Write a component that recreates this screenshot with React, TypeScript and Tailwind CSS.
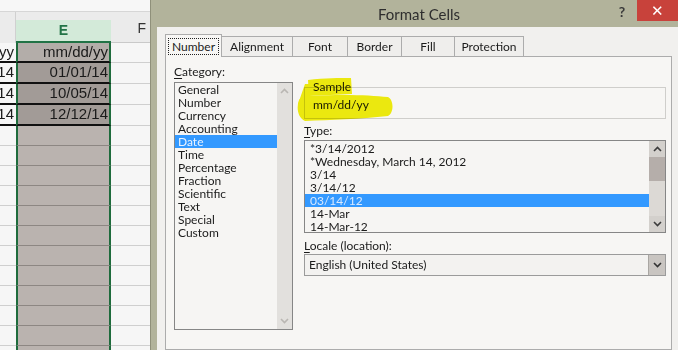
import type { ReactNode } from "react";

const categories = [
  "General",
  "Number",
  "Currency",
  "Accounting",
  "Date",
  "Time",
  "Percentage",
  "Fraction",
  "Scientific",
  "Text",
  "Special",
  "Custom",
];

const types = [
  "*3/14/2012",
  "*Wednesday, March 14, 2012",
  "3/14",
  "3/14/12",
  "03/14/12",
  "14-Mar",
  "14-Mar-12",
];

const tabs = ["Number", "Alignment", "Font", "Border", "Fill", "Protection"];
const tabWidths = ["w-[57px]", "w-[71px]", "w-[55px]", "w-[54px]", "w-[53px]", "w-[69px]"];

const dataRows = [
  { v: "mm/dd/yy", h: "h-[20px]", bg: "bg-[#b3ada9]" },
  { v: "01/01/14", h: "h-[21px]", bg: "bg-[#a29b97]" },
  { v: "10/05/14", h: "h-[21px]", bg: "bg-[#a29b97]" },
  { v: "12/12/14", h: "h-[21px]", bg: "bg-[#a29b97]" },
];

function Chevron({ up, color = "#555" }: { up?: boolean; color?: string }) {
  return (
    <svg width="9" height="6" viewBox="0 0 9 6">
      <path
        d={up ? "M1 5 L4.5 1.5 L8 5" : "M1 1 L4.5 4.5 L8 1"}
        fill="none"
        stroke={color}
        strokeWidth="1.6"
      />
    </svg>
  );
}

function Cell({ children, className }: { children?: ReactNode; className: string }) {
  return (
    <div className={`flex items-center justify-end overflow-hidden whitespace-nowrap ${className}`}>
      {children}
    </div>
  );
}

function Sheet() {
  const empty = Array.from({ length: 12 });
  return (
    <div className="w-[150px] h-full flex flex-col bg-[#f5f5f5] font-['Liberation_Sans',Arial,sans-serif] text-[15px] text-[#1a1a1a]">
      <div className="h-[12px] shrink-0 border-b border-[#d6d6d6] bg-[#f7f7f7]" />
      {/* column headers */}
      <div className="h-[31px] shrink-0 flex">
        <div className="w-[16px] bg-[#ebebeb] border-r border-[#d0d0d0]" />
        <div className="w-[95px] flex flex-col bg-[#ebebeb]">
          <div className="h-[10px]" />
          <div className="flex-1 bg-[#d3ead9] border-b-2 border-[#217346] flex items-center justify-center font-bold text-[#217346] text-[14px]">
            E
          </div>
        </div>
        <div className="flex-1 bg-[#ebebeb] border-b border-[#c9c9c9] flex items-end justify-end pr-[4px] pb-[3px] text-[#333] text-[14px]">
          F
        </div>
      </div>
      {dataRows.map((r) => (
        <div key={r.v} className={`${r.h} shrink-0 flex`}>
          <Cell className="w-[16px] border-b-2 border-[#111] bg-[#f6f6f6] pr-[2px]">{r.v}</Cell>
          <Cell className={`w-[95px] border-x-2 border-x-[#1e6b3c] border-b-2 border-b-[#111] ${r.bg} pr-[1px]`}>
            {r.v}
          </Cell>
          <div className="flex-1 border-b border-[#cfcfcf] bg-[#f6f6f6]" />
        </div>
      ))}
      {empty.map((_, i) => (
        <div key={i} className="h-[20px] flex shrink-0">
          <div className="w-[16px] border-b border-[#cfcfcf] bg-[#f6f6f6]" />
          <div className="w-[95px] border-x-2 border-x-[#1e6b3c] border-b border-b-[#8d8783] bg-[#bab3af]" />
          <div className="flex-1 border-b border-[#cfcfcf] bg-[#f6f6f6]" />
        </div>
      ))}
    </div>
  );
}

function Dialog() {
  return (
    <div className="flex-1 h-full flex flex-col bg-[#b2b39b] border-l border-[#8f907a] font-['Lato','Noto_Sans',sans-serif] text-[12px] text-[#1b1b1b]">
      {/* title bar */}
      <div className="h-[27px] flex shrink-0">
        <div className="flex-1 pl-[80px] pt-[3px] text-center text-[15px] text-[#2e2e2e]">Format Cells</div>
        <div className="w-[30px] text-center pt-[1px] text-[14px] font-bold text-[#3a3a3a]">?</div>
        <div className="w-[41px] h-[21px] bg-[#c8423b] flex items-center justify-center text-white text-[15px]">
          ✕
        </div>
      </div>
      {/* client */}
      <div className="flex-1 flex pl-[6px]">
        <div className="flex-1 bg-[#f1f0ee] pt-[6px] pl-[8px] flex flex-col">
          {/* tabs */}
          <div className="h-[23px] flex items-end shrink-0">
            {tabs.map((t, i) =>
              i === 0 ? (
                <div
                  key={t}
                  className={`${tabWidths[i]} h-[23px] relative z-10 -mb-px bg-[#f7f6f4] border border-b-0 border-[#acacac] flex items-center justify-center`}
                >
                  <span className="border border-dotted border-[#222] px-[3px] leading-[15px]">{t}</span>
                </div>
              ) : (
                <div
                  key={t}
                  className={`${tabWidths[i]} h-[20px] bg-[#efeeec] border border-b-0 border-l-0 border-[#acacac] flex items-center justify-center`}
                >
                  {t}
                </div>
              )
            )}
          </div>
          {/* panel */}
          <div className="w-[507px] flex-1 bg-[#f7f6f4] border border-[#acacac] flex">
            {/* category column */}
            <div className="pl-[8px] pt-[8px] flex flex-col">
              <div className="h-[14px] leading-[14px]">
                <u className="underline-offset-2">C</u>ategory:
              </div>
              <div className="mt-[3px] w-[119px] h-[248px] border border-[#868686] bg-[#f6f5f3] flex">
                <div className="flex-1">
                  {categories.map((c) => (
                    <div
                      key={c}
                      className={`h-[13px] leading-[13px] pl-[3px] ${c === "Date" ? "bg-[#3399ff] text-[#eaf3ff]" : ""}`}
                    >
                      {c}
                    </div>
                  ))}
                </div>
                <div className="w-[15px] bg-[#e2e0dd] flex flex-col items-center justify-between py-[5px]">
                  <Chevron up color="#b9b6b2" />
                  <Chevron color="#b9b6b2" />
                </div>
              </div>
            </div>
            {/* right column */}
            <div className="ml-[11px] mt-[30px] w-[362px] flex flex-col">
              <div className="relative h-[32px] border border-[#cfcecb]">
                <div className="absolute -top-[8px] left-[6px] px-[2px] leading-[14px]">Sample</div>
                <div className="pl-[8px] pt-[10px] leading-[14px]">mm/dd/yy</div>
              </div>
              <div className="mt-[5px] h-[13px] leading-[13px]">
                <u className="underline-offset-2">T</u>ype:
              </div>
              <div className="mt-[3px] h-[93px] border border-[#868686] bg-[#f6f5f3] flex">
                <div className="flex-1 pt-[1px]">
                  {types.map((t) => (
                    <div
                      key={t}
                      className={`h-[13px] leading-[13px] pl-[5px] ${t === "03/14/12" ? "bg-[#3399ff] text-[#d8e9ff]" : ""}`}
                    >
                      {t}
                    </div>
                  ))}
                </div>
                <div className="w-[16px] bg-[#dcd9d5] flex flex-col">
                  <div className="h-[16px] bg-[#d3d0cc] flex items-center justify-center">
                    <Chevron up color="#3c3c3c" />
                  </div>
                  <div className="h-[24px] bg-[#b5aeaa]" />
                  <div className="flex-1" />
                  <div className="h-[16px] bg-[#d3d0cc] flex items-center justify-center">
                    <Chevron color="#3c3c3c" />
                  </div>
                </div>
              </div>
              <div className="mt-[6px] h-[13px] leading-[13px]">
                <u className="underline-offset-2">L</u>ocale (location):
              </div>
              <div className="mt-[2px] h-[22px] border border-[#9b9b9b] bg-[#f3f2f0] flex items-center">
                <div className="flex-1 pl-[4px]">English (United States)</div>
                <div className="w-[17px] h-full bg-[#c9c5c1] border-l border-[#a9a6a2] flex items-center justify-center">
                  <Chevron color="#333" />
                </div>
              </div>
            </div>
          </div>
        </div>
      </div>
    </div>
  );
}

export default function App() {
  return (
    <div className="w-[678px] h-[350px] flex overflow-hidden relative bg-[#f5f5f5]">
      <Sheet />
      <Dialog />
      {/* highlighter marks */}
      <svg
        className="absolute left-0 top-0 pointer-events-none mix-blend-multiply"
        width="678"
        height="350"
        viewBox="0 0 678 350"
      >
        <g fill="#f3f10f">
          <path d="M308 80 C 325 78, 340 78, 351 78 L 352 94 C 338 95, 322 95, 309 96 Z" />
          <path d="M305 84 L 312 84 L 309 100 L 298 104 Z" />
          <path d="M312 96 C 340 94, 370 95, 388 97 C 394 100, 394 113, 388 116 C 360 119, 330 120, 305 121 C 298 118, 296 108, 299 100 C 301 97, 306 96, 312 96 Z" />
        </g>
      </svg>
    </div>
  );
}
